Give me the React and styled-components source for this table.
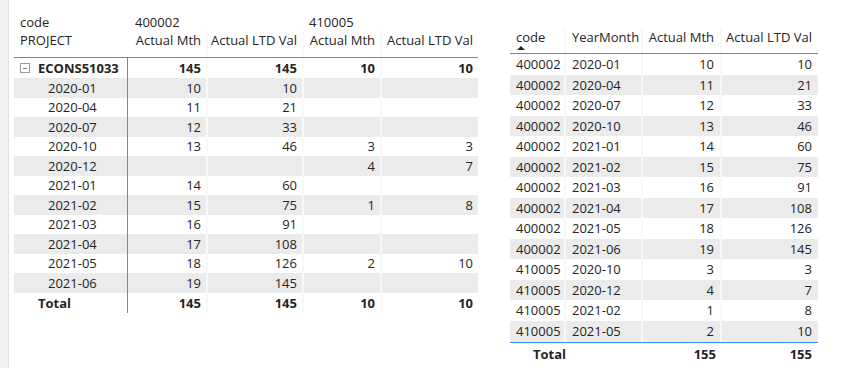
import React from 'react'
import styled, { createGlobalStyle } from 'styled-components'

const GlobalStyle = createGlobalStyle`
    body {
        margin: 0;
        background: #ffffff;
        font-family: "Open Sans", "Liberation Sans", sans-serif;
        font-size: 13px;
        color: #252423;
    }
`;

const Page = styled.div`
    display: flex;
    align-items: flex-start;
    height: 368px;
    overflow: hidden;
`;

const SideStrip = styled.div`
    width: 8px;
    height: 368px;
    background: #f3f2f1;
    border-right: 1px solid #e1dfdd;
    flex-shrink: 0;
`;

const Visual = styled.div`
    margin-left: ${p => p.$left}px;
    margin-top: ${p => p.$top}px;
    width: ${p => p.$width}px;
`;

const Row = styled.div`
    display: grid;
    grid-template-columns: ${p => p.$cols};
    height: ${p => p.$h}px;
    border-bottom: ${p => p.$line ? '1px solid #3d97e6' : 'none'};
`;

const Cell = styled.div`
    display: flex;
    align-items: ${p => p.$top ? 'flex-start' : 'center'};
    justify-content: ${p => p.$right ? 'flex-end' : 'flex-start'};
    padding: 0 ${p => p.$pr ?? 6}px 0 ${p => p.$pl ?? 6}px;
    font-weight: ${p => p.$bold ? 700 : 400};
    background: ${p => p.$shade ? '#ebebeb' : 'transparent'};
    border-right: ${p => p.$blue ? '1px solid #3d97e6' : p.$last ? 'none' : '2px solid #f8f8f8'};
    grid-column: ${p => p.$span ? `span ${p.$span}` : 'auto'};
    white-space: nowrap;
    line-height: 18px;
    overflow: hidden;
`;

const HeadStack = styled.div`
    display: flex;
    flex-direction: column;
    align-items: flex-start;
`;

const SortArrow = styled.span`
    width: 0;
    height: 0;
    margin-left: 1px;
    border-left: 4px solid transparent;
    border-right: 4px solid transparent;
    border-bottom: 4px solid #252423;
`;

const Expander = styled.span`
    position: relative;
    width: 8px;
    height: 8px;
    border: 1px solid #9a9a9a;
    margin-right: 8px;
    flex-shrink: 0;
    &::after {
        content: '';
        position: absolute;
        left: 2px;
        right: 2px;
        top: 3.5px;
        height: 1px;
        background: #7a7a7a;
    }
`;

const MATRIX_COLS = '114px 80px 96px 78px 96px';
const TABLE_COLS = '56px 77px 79px 96px';

const matrixRows = [
    ['2020-01', 10, 10, '', ''],
    ['2020-04', 11, 21, '', ''],
    ['2020-07', 12, 33, '', ''],
    ['2020-10', 13, 46, 3, 3],
    ['2020-12', '', '', 4, 7],
    ['2021-01', 14, 60, '', ''],
    ['2021-02', 15, 75, 1, 8],
    ['2021-03', 16, 91, '', ''],
    ['2021-04', 17, 108, '', ''],
    ['2021-05', 18, 126, 2, 10],
    ['2021-06', 19, 145, '', ''],
];

const tableRows = [
    ['400002', '2020-01', 10, 10],
    ['400002', '2020-04', 11, 21],
    ['400002', '2020-07', 12, 33],
    ['400002', '2020-10', 13, 46],
    ['400002', '2021-01', 14, 60],
    ['400002', '2021-02', 15, 75],
    ['400002', '2021-03', 16, 91],
    ['400002', '2021-04', 17, 108],
    ['400002', '2021-05', 18, 126],
    ['400002', '2021-06', 19, 145],
    ['410005', '2020-10', 3, 3],
    ['410005', '2020-12', 4, 7],
    ['410005', '2021-02', 1, 8],
    ['410005', '2021-05', 2, 10],
];

function Matrix() {
    return (
        <Visual $left={5} $top={12} $width={464}>
            <Row $cols={MATRIX_COLS} $h={19}>
                <Cell $last>code</Cell>
                <Cell $span={2} $pl={7} $last>400002</Cell>
                <Cell $span={2} $pl={5} $last>410005</Cell>
            </Row>
            <Row $cols={MATRIX_COLS} $h={26} $line>
                <Cell $top $last>PROJECT</Cell>
                <Cell $top $right $pr={5}>Actual Mth</Cell>
                <Cell $top $right $pr={5}>Actual LTD Val</Cell>
                <Cell $top $right $pr={5}>Actual Mth</Cell>
                <Cell $top $right $pr={5} $last>Actual LTD Val</Cell>
            </Row>
            <Row $cols={MATRIX_COLS} $h={20}>
                <Cell $bold $blue>
                    <Expander />ECONS51033
                </Cell>
                <Cell $bold $right $pr={5}>145</Cell>
                <Cell $bold $right $pr={5}>145</Cell>
                <Cell $bold $right $pr={5}>10</Cell>
                <Cell $bold $right $pr={5} $last>10</Cell>
            </Row>
            {matrixRows.map((r, i) => {
                const shade = i % 2 === 0;
                return (
                    <Row $cols={MATRIX_COLS} $h={19.5} key={r[0]}>
                        <Cell $shade={shade} $blue $pl={34}>{r[0]}</Cell>
                        <Cell $shade={shade} $right $pr={5}>{r[1]}</Cell>
                        <Cell $shade={shade} $right $pr={5}>{r[2]}</Cell>
                        <Cell $shade={shade} $right $pr={5}>{r[3]}</Cell>
                        <Cell $shade={shade} $right $pr={5} $last>{r[4]}</Cell>
                    </Row>
                )
            })}
            <Row $cols={MATRIX_COLS} $h={20}>
                <Cell $bold $blue $pl={24}>Total</Cell>
                <Cell $bold $right $pr={5}>145</Cell>
                <Cell $bold $right $pr={5}>145</Cell>
                <Cell $bold $right $pr={5}>10</Cell>
                <Cell $bold $right $pr={5} $last>10</Cell>
            </Row>
        </Visual>
    )
}

function DetailTable() {
    return (
        <Visual $left={32} $top={28} $width={308}>
            <Row $cols={TABLE_COLS} $h={25} $line>
                <Cell $top>
                    <HeadStack>
                        code
                        <SortArrow />
                    </HeadStack>
                </Cell>
                <Cell $top>YearMonth</Cell>
                <Cell $top $right>Actual Mth</Cell>
                <Cell $top $right $last>Actual LTD Val</Cell>
            </Row>
            {tableRows.map((r, i) => {
                const shade = i % 2 === 1;
                const last = i === tableRows.length - 1;
                return (
                    <Row $cols={TABLE_COLS} $h={last ? 21.5 : 20.5} $line={last} key={r[0] + r[1]}>
                        <Cell $shade={shade}>{r[0]}</Cell>
                        <Cell $shade={shade}>{r[1]}</Cell>
                        <Cell $shade={shade} $right>{r[2]}</Cell>
                        <Cell $shade={shade} $right $last>{r[3]}</Cell>
                    </Row>
                )
            })}
            <Row $cols={TABLE_COLS} $h={22}>
                <Cell $bold $pl={23} $last>Total</Cell>
                <Cell $last />
                <Cell $bold $right $last>155</Cell>
                <Cell $bold $right $last>155</Cell>
            </Row>
        </Visual>
    )
}

export default function App() {
    return (
        <>
            <GlobalStyle />
            <Page>
                <SideStrip />
                <Matrix />
                <DetailTable />
            </Page>
        </>
    )
}
